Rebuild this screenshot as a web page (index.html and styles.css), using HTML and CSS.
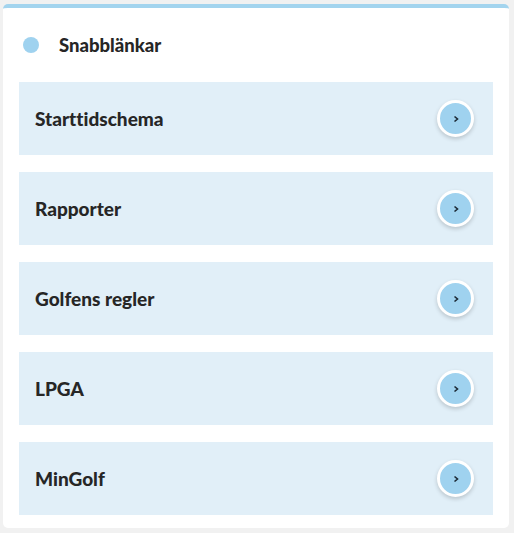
FILE: index.html
```html
<!DOCTYPE html>
<html lang="sv">
<head>
<meta charset="utf-8">
<link rel="stylesheet" href="styles.css">
</head>
<body>
<div class="card">
  <div class="header">
    <span class="dot"></span>
    <h2 class="title">Snabblänkar</h2>
  </div>
  <ul class="links">
    <li class="link"><span class="label">Starttidschema</span><span class="btn"><svg width="8" height="8" viewBox="0 0 8 8"><path d="M2.5 1.5 L5.5 4 L2.5 6.5" fill="none" stroke="#1d2a36" stroke-width="1.6"/></svg></span></li>
    <li class="link"><span class="label">Rapporter</span><span class="btn"><svg width="8" height="8" viewBox="0 0 8 8"><path d="M2.5 1.5 L5.5 4 L2.5 6.5" fill="none" stroke="#1d2a36" stroke-width="1.6"/></svg></span></li>
    <li class="link"><span class="label">Golfens regler</span><span class="btn"><svg width="8" height="8" viewBox="0 0 8 8"><path d="M2.5 1.5 L5.5 4 L2.5 6.5" fill="none" stroke="#1d2a36" stroke-width="1.6"/></svg></span></li>
    <li class="link"><span class="label">LPGA</span><span class="btn"><svg width="8" height="8" viewBox="0 0 8 8"><path d="M2.5 1.5 L5.5 4 L2.5 6.5" fill="none" stroke="#1d2a36" stroke-width="1.6"/></svg></span></li>
    <li class="link"><span class="label">MinGolf</span><span class="btn"><svg width="8" height="8" viewBox="0 0 8 8"><path d="M2.5 1.5 L5.5 4 L2.5 6.5" fill="none" stroke="#1d2a36" stroke-width="1.6"/></svg></span></li>
  </ul>
</div>
</body>
</html>
```
FILE: styles.css
```css
html, body {
  margin: 0;
  padding: 0;
  background: #f1f1f1;
}
body {
  padding: 4px 4px 5px 3px;
  font-family: Lato, "Noto Sans", sans-serif;
  font-variant-ligatures: none;
  color: #262626;
}
.card {
  background: #fff;
  border-top: 4px solid #a3d4ee;
  border-radius: 5px;
  padding: 0 16px 13px 16px;
  width: 474px;
}
.header {
  display: flex;
  align-items: center;
  height: 74px;
}
.dot {
  width: 16px;
  height: 16px;
  border-radius: 50%;
  background: #9fd2ef;
  margin-left: 4px;
  margin-right: 20px;
}
.title {
  margin: 0;
  font-size: 18.5px;
  font-weight: 900;
  color: #262626;
}
.links {
  list-style: none;
  margin: 0;
  padding: 0;
  display: flex;
  flex-direction: column;
  gap: 17px;
}
.link {
  display: flex;
  align-items: center;
  justify-content: space-between;
  height: 73px;
  background: #e1eff8;
  padding: 0 19px 0 16px;
}
.label {
  font-size: 19px;
  font-weight: 900;
  color: #262626;
}
.btn {
  width: 31px;
  height: 31px;
  border-radius: 50%;
  background: #9fd2ef;
  border: 3px solid #fff;
  box-shadow: 0 2px 4px rgba(0,0,0,0.18);
  display: flex;
  align-items: center;
  justify-content: center;
}
```
